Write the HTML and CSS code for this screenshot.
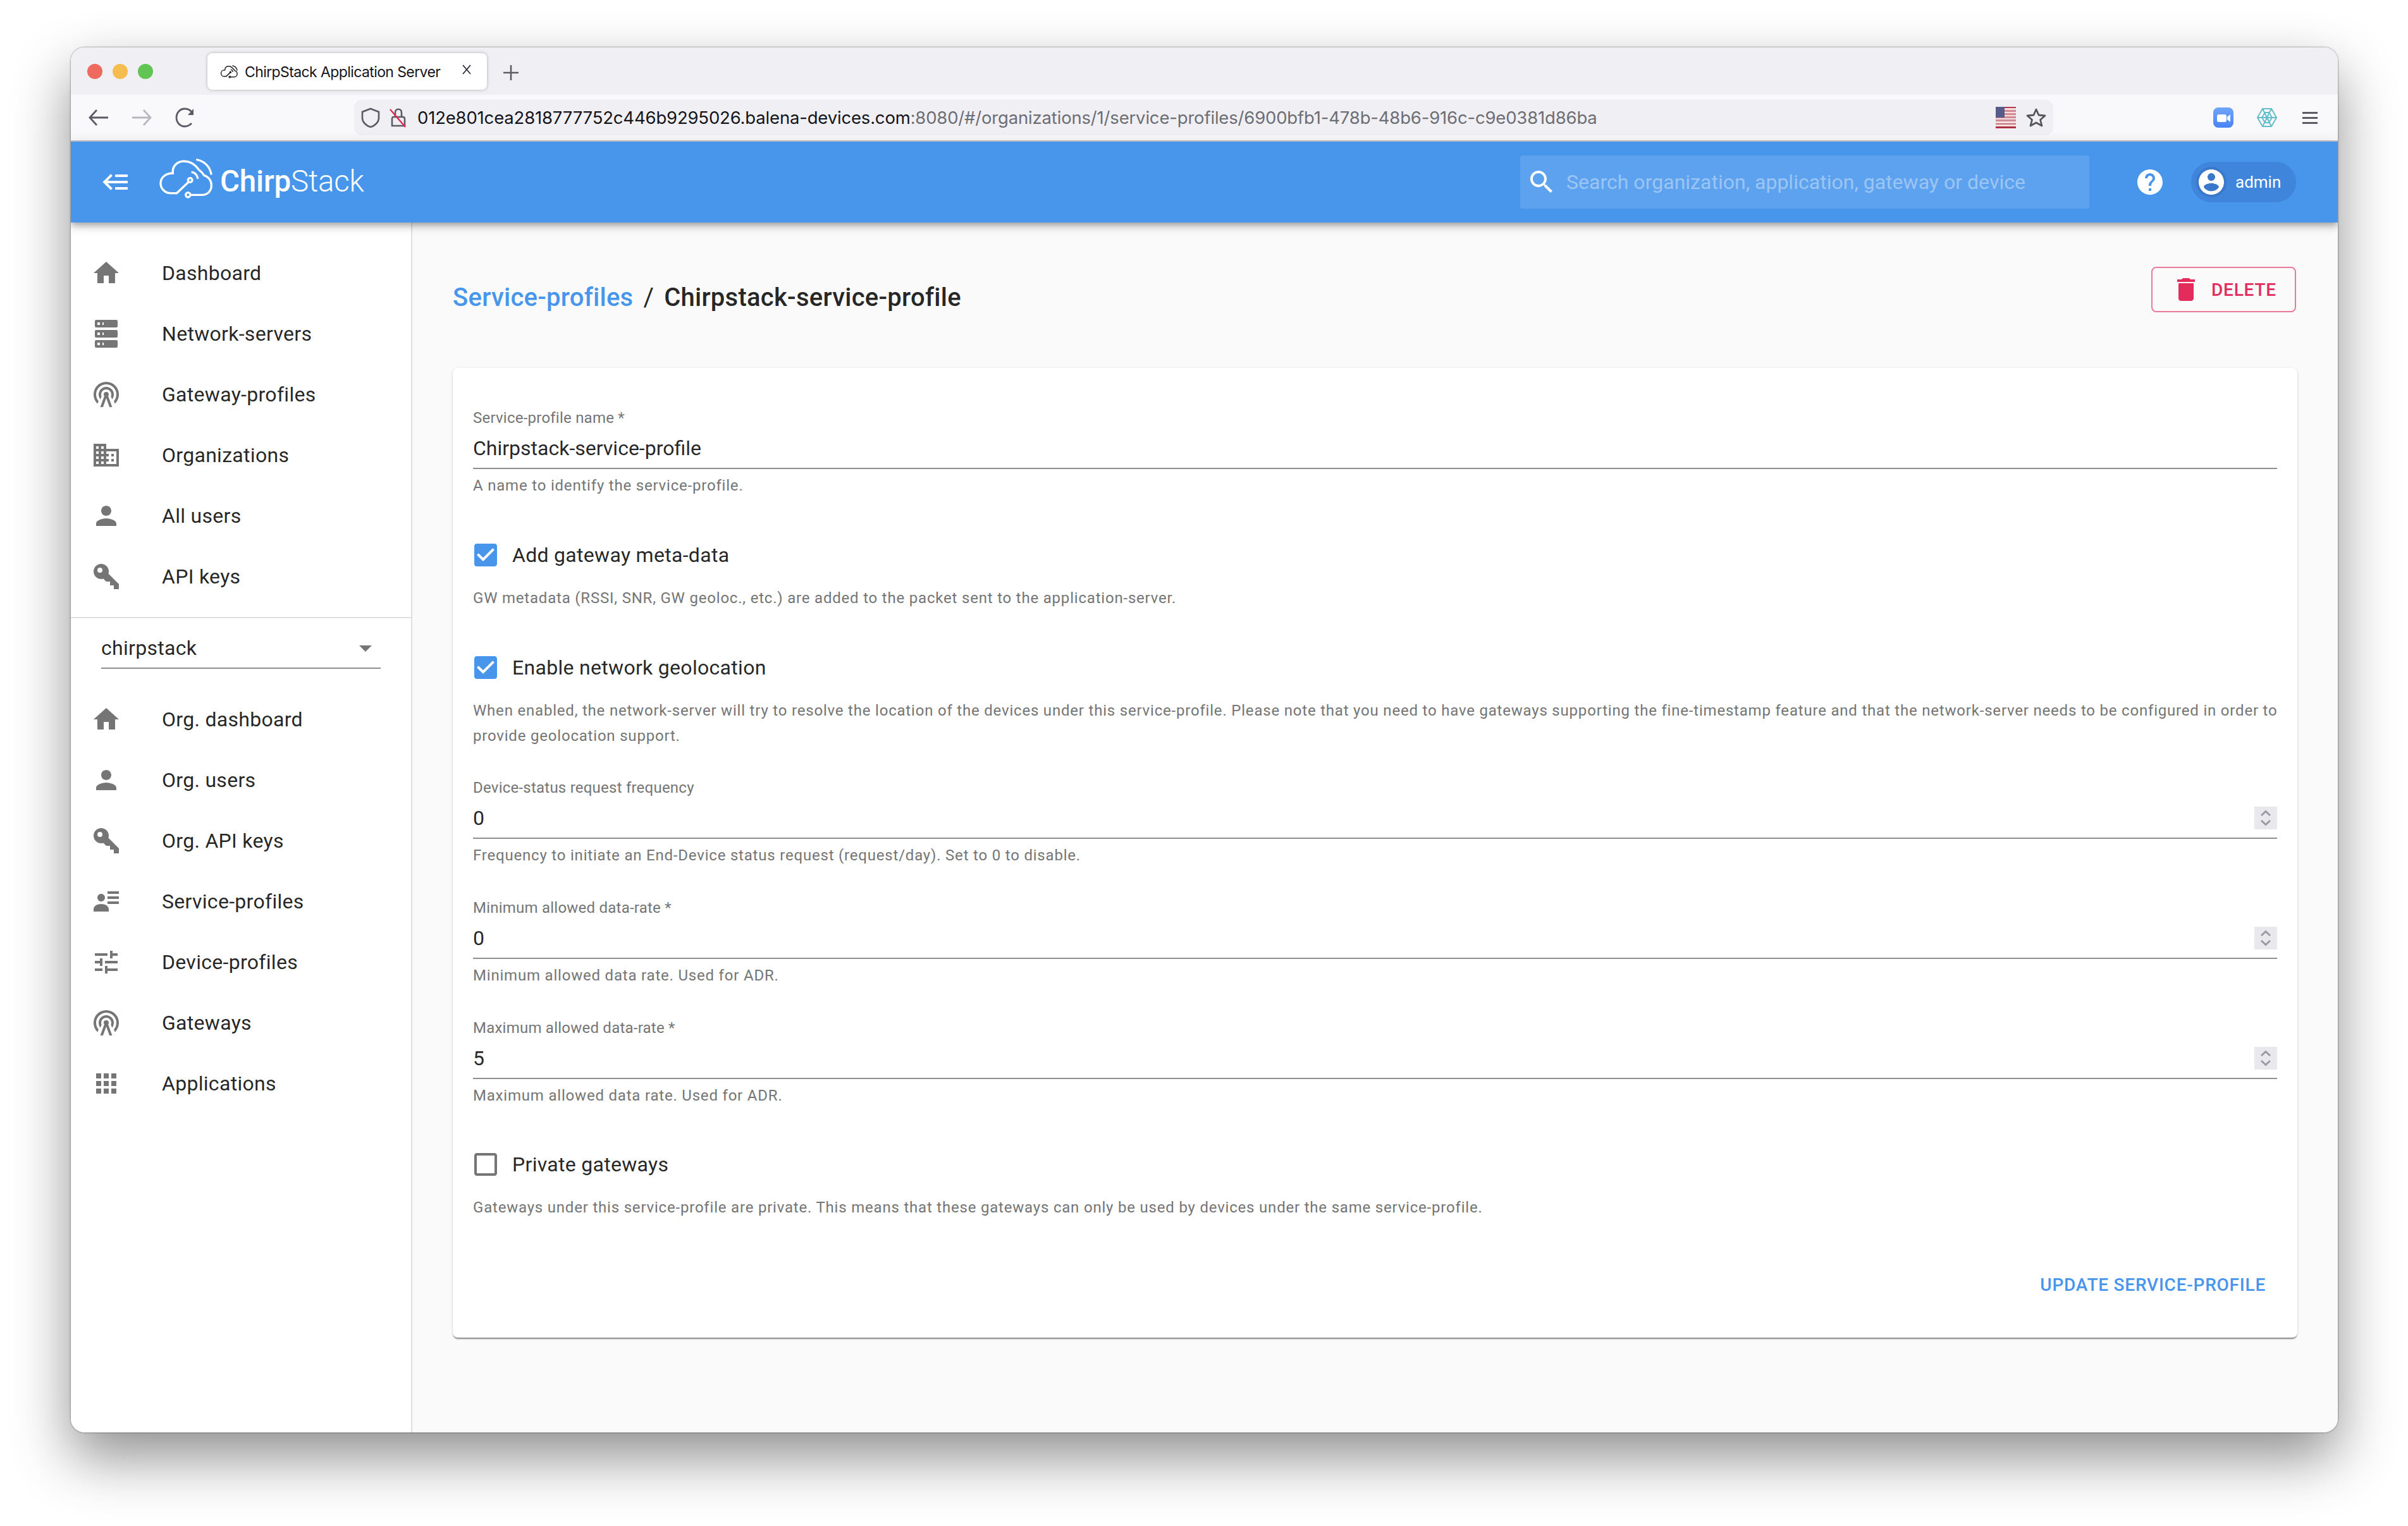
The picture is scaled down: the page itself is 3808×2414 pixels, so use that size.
FILE: index.html
```html
<!DOCTYPE html>
<html lang="en">
<head>
<meta charset="utf-8">
<title>ChirpStack Application Server</title>
<link rel="stylesheet" href="styles.css">
</head>
<body>
<svg class="sprite" aria-hidden="true">
  <defs>
    <symbol id="i-home" viewBox="0 0 24 24"><path d="M10 20v-6h4v6h5v-8h3L12 3 2 12h3v8z"/></symbol>
    <symbol id="i-server" viewBox="0 0 24 24"><path d="M4,1H20A1,1 0 0,1 21,2V6A1,1 0 0,1 20,7H4A1,1 0 0,1 3,6V2A1,1 0 0,1 4,1M4,9H20A1,1 0 0,1 21,10V14A1,1 0 0,1 20,15H4A1,1 0 0,1 3,14V10A1,1 0 0,1 4,9M4,17H20A1,1 0 0,1 21,18V22A1,1 0 0,1 20,23H4A1,1 0 0,1 3,22V18A1,1 0 0,1 4,17M9,5H10V3H9V5M9,13H10V11H9V13M9,21H10V19H9V21M5,3V5H7V3H5M5,11V13H7V11H5M5,19V21H7V19H5Z"/></symbol>
    <symbol id="i-tower" viewBox="0 0 24 24"><path d="M12,10A2,2 0 0,1 14,12C14,12.5 13.82,12.94 13.53,13.29L16.7,22H14.57L12,14.93L9.43,22H7.3L10.47,13.29C10.18,12.94 10,12.5 10,12A2,2 0 0,1 12,10M12,8A4,4 0 0,0 8,12C8,12.5 8.1,13 8.28,13.46L7.4,15.86C6.53,14.81 6,13.47 6,12A6,6 0 0,1 12,6A6,6 0 0,1 18,12C18,13.47 17.47,14.81 16.6,15.86L15.72,13.46C15.9,13 16,12.5 16,12A4,4 0 0,0 12,8M12,4A8,8 0 0,0 4,12C4,14 4.73,15.82 5.94,17.23L5.18,19.33C3.21,17.5 2,14.89 2,12A10,10 0 0,1 12,2A10,10 0 0,1 22,12C22,14.89 20.79,17.5 18.82,19.33L18.06,17.23C19.27,15.82 20,14 20,12A8,8 0 0,0 12,4Z"/></symbol>
    <symbol id="i-domain" viewBox="0 0 24 24"><path d="M12 7V3H2v18h20V7H12zM6 19H4v-2h2v2zm0-4H4v-2h2v2zm0-4H4V9h2v2zm0-4H4V5h2v2zm4 12H8v-2h2v2zm0-4H8v-2h2v2zm0-4H8V9h2v2zm0-4H8V5h2v2zm10 12h-8v-2h2v-2h-2v-2h2v-2h-2V9h8v10zm-2-8h-2v2h2v-2zm0 4h-2v2h2v-2z"/></symbol>
    <symbol id="i-person" viewBox="0 0 24 24"><path d="M12 12c2.21 0 4-1.79 4-4s-1.79-4-4-4-4 1.79-4 4 1.79 4 4 4zm0 2c-2.67 0-8 1.34-8 4v2h16v-2c0-2.66-5.33-4-8-4z"/></symbol>
    <symbol id="i-key" viewBox="0 0 24 24"><path d="M22,18V22H18V19H15V16H12L9.74,13.74C9.19,13.91 8.61,14 8,14A6,6 0 0,1 2,8A6,6 0 0,1 8,2A6,6 0 0,1 14,8C14,8.61 13.91,9.19 13.74,9.74L22,18M7,5A2,2 0 0,0 5,7A2,2 0 0,0 7,9A2,2 0 0,0 9,7A2,2 0 0,0 7,5Z"/></symbol>
    <symbol id="i-details" viewBox="0 0 24 24"><path d="M11,9C11,10.66 9.66,12 8,12C6.34,12 5,10.66 5,9C5,7.34 6.34,6 8,6C9.66,6 11,7.34 11,9M14,20H2V18C2,15.79 4.69,14 8,14C11.31,14 14,15.79 14,18M22,12V14H13V12M22,8V10H13V8M22,4V6H13V4Z"/></symbol>
    <symbol id="i-tune" viewBox="0 0 24 24"><path d="M3 17v2h6v-2H3zM3 5v2h10V5H3zm10 16v-2h8v-2h-8v-2h-2v6h2zM7 9v2H3v2h4v2h2V9H7zm14 4v-2H11v2h10zm-6-4h2V7h4V5h-4V3h-2v6z"/></symbol>
    <symbol id="i-apps" viewBox="0 0 24 24"><path d="M4 8h4V4H4v4zm6 12h4v-4h-4v4zm-6 0h4v-4H4v4zm0-6h4v-4H4v4zm6 0h4v-4h-4v4zm6-10v4h4V4h-4zm-6 4h4V4h-4v4zm6 6h4v-4h-4v4zm0 6h4v-4h-4v4z"/></symbol>
    <symbol id="i-checked" viewBox="0 0 24 24"><path d="M19 3H5c-1.11 0-2 .9-2 2v14c0 1.1.89 2 2 2h14c1.11 0 2-.9 2-2V5c0-1.1-.89-2-2-2zm-9 14l-5-5 1.41-1.41L10 14.17l7.59-7.59L19 8l-9 9z"/></symbol>
    <symbol id="i-unchecked" viewBox="0 0 24 24"><path d="M19 5v14H5V5h14m0-2H5c-1.1 0-2 .9-2 2v14c0 1.1.9 2 2 2h14c1.1 0 2-.9 2-2V5c0-1.1-.9-2-2-2z"/></symbol>
    <symbol id="i-spin" viewBox="0 0 36 36"><path d="M11 14l7-6.500 7 6.500M11 22l7 6.500 7-6.500"/></symbol>
    <symbol id="i-cloud" viewBox="0 0 300 255"><path d="M118 197H92C62 197 42 175 42 150C42 122 66 102 100 102C96 70 120 45 152 45C180 45 204 58 222 84C232 92 242 102 248 112C268 118 283 136 283 160C283 186 264 205 240 205H184M118 197L175 143M192 97C205 100 215 112 218 125M215 38C250 45 275 70 282 105"/><circle cx="182" cy="135" r="10"/><circle cx="172" cy="205" r="11"/></symbol>
  </defs>
</svg>

<div class="window">
  <div class="tabbar">
    <span class="light light-red"></span>
    <span class="light light-yellow"></span>
    <span class="light light-green"></span>
    <div class="tab">
      <svg class="tab-icon"><use href="#i-cloud"/></svg>
      <span class="tab-title">ChirpStack Application Server</span>
      <svg class="tab-close" viewBox="0 0 18 18"><path d="M3 2l12 14M15 2L3 16"/></svg>
    </div>
    <svg class="tab-new" viewBox="0 0 26 26"><path d="M13 1v24M1 13h24"/></svg>
  </div>

  <div class="toolbar">
    <svg class="nav-icon" viewBox="0 0 32 32"><path d="M31 16H3M13 4L2 16l11 12"/></svg>
    <svg class="nav-icon nav-off" viewBox="0 0 32 32"><path d="M1 16h28M19 4l11 12-11 12"/></svg>
    <svg class="nav-icon" viewBox="0 0 32 32"><path d="M28 8C25 4 21 2 16 2 9 2 3 8 3 16s6 14 13 14c4 0 8-2 11-5"/><path class="nav-solid" d="M21 12h9V2z"/></svg>
    <div class="urlbar">
      <svg class="url-icon" viewBox="0 0 32 32"><path d="M16 2l13 5v10c0 6-6 12-13 14C9 29 3 23 3 17V7z"/></svg>
      <svg class="url-icon" viewBox="0 0 32 32"><path d="M7 15h15c2 0 3 1 3 3v11H5V18c0-2 1-3 2-3zM10 15V8c0-7 10-7 10 0v7"/><path class="url-slash" d="M2 3l24 28"/></svg>
      <span class="url-text"><span class="url-host">012e801cea2818777752c446b9295026.balena-devices.com</span>:8080/#/organizations/1/service-profiles/6900bfb1-478b-48b6-916c-c9e0381d86ba</span>
      <svg class="flag" viewBox="0 0 32 34" preserveAspectRatio="none">
        <rect width="32" height="34" fill="#f3dfe1"/>
        <rect y="0" width="32" height="2" fill="#b33a48"/><rect y="5" width="32" height="3" fill="#cf8c95"/><rect y="10" width="32" height="3" fill="#cf8c95"/><rect y="15" width="32" height="3" fill="#cf8c95"/><rect y="20" width="32" height="3" fill="#cf8c95"/><rect y="26" width="32" height="2" fill="#c4707c"/><rect y="31" width="32" height="3" fill="#ae2f40"/>
        <rect width="14" height="17" fill="#565b8a"/>
      </svg>
      <svg class="star" viewBox="0 0 32 32"><path d="M16 3l4 9 10 1-7.500 6.500L25 29l-9-5-9 5 2.500-9.500L2 13l10-1z"/></svg>
    </div>
    <svg class="ext-zoom" viewBox="0 0 32 32"><defs><linearGradient id="zoomfill" x1="0" y1="0" x2="0" y2="1"><stop offset="0" stop-color="#6fa5fb"/><stop offset="1" stop-color="#4a83f4"/></linearGradient></defs><rect width="32" height="32" rx="8" fill="url(#zoomfill)"/><rect x="6" y="11" width="15" height="12" rx="3" fill="#fff"/><path d="M22 15l5-4v12l-5-4z" fill="#fff"/></svg>
    <svg class="ext-web" viewBox="0 0 32 32"><path d="M9 2h14l8 14-8 14H9L1 16zM13 8h6l5 8-5 8h-6l-5-8zM1 16h30M9 2l14 28M23 2L9 30"/></svg>
    <div class="burger"><span></span><span></span><span></span></div>
  </div>

  <header class="appbar">
    <svg class="menu-toggle" viewBox="0 0 24 24"><path d="M5,13L9,17L7.6,18.42L1.18,12L7.6,5.58L9,7L5,11H21V13H5M21,6V8H11V6H21M21,16V18H11V16H21Z"/></svg>
    <svg class="logo-mark"><use href="#i-cloud"/></svg>
    <span class="logo-text"><b>Chirp</b>Stack</span>
    <div class="search">
      <svg class="search-icon" viewBox="0 0 24 24"><path d="M15.5 14h-.79l-.28-.27C15.41 12.59 16 11.11 16 9.5 16 5.91 13.09 3 9.5 3S3 5.91 3 9.5 5.91 16 9.5 16c1.61 0 3.09-.59 4.23-1.57l.27.28v.79l5 4.99L20.490 19l-4.990-5zm-6 0C7.010 14 5 11.990 5 9.500S7.010 5 9.500 5 14 7.010 14 9.500 11.990 14 9.500 14z"/></svg>
      <span class="search-text">Search organization, application, gateway or device</span>
    </div>
    <svg class="help" viewBox="0 0 24 24"><path d="M12 2C6.480 2 2 6.480 2 12s4.480 10 10 10 10-4.480 10-10S17.520 2 12 2zm1 17h-2v-2h2v2zm2.070-7.750l-.900.920C13.450 12.900 13 13.500 13 15h-2v-.500c0-1.100.450-2.100 1.170-2.830l1.240-1.260c.370-.360.590-.860.590-1.410 0-1.100-.900-2-2-2s-2 .900-2 2H8c0-2.210 1.790-4 4-4s4 1.790 4 4c0 .880-.360 1.680-.930 2.250z"/></svg>
    <div class="chip">
      <span class="avatar"><svg viewBox="0 0 24 24"><path d="M12 2C6.480 2 2 6.480 2 12s4.480 10 10 10 10-4.480 10-10S17.520 2 12 2zm0 3c1.660 0 3 1.340 3 3s-1.340 3-3 3-3-1.340-3-3 1.340-3 3-3zm0 14.200c-2.500 0-4.710-1.280-6-3.220.030-1.990 4-3.080 6-3.080 1.990 0 5.970 1.090 6 3.080-1.290 1.940-3.500 3.220-6 3.220z"/></svg></span>
      <span class="chip-label">admin</span>
    </div>
  </header>

  <div class="body">
    <aside class="sidebar">
      <nav class="menu">
        <a class="menu-item"><svg class="menu-icon"><use href="#i-home"/></svg><span>Dashboard</span></a>
        <a class="menu-item"><svg class="menu-icon"><use href="#i-server"/></svg><span>Network-servers</span></a>
        <a class="menu-item"><svg class="menu-icon"><use href="#i-tower"/></svg><span>Gateway-profiles</span></a>
        <a class="menu-item"><svg class="menu-icon"><use href="#i-domain"/></svg><span>Organizations</span></a>
        <a class="menu-item"><svg class="menu-icon"><use href="#i-person"/></svg><span>All users</span></a>
        <a class="menu-item"><svg class="menu-icon"><use href="#i-key"/></svg><span>API keys</span></a>
      </nav>
      <div class="divider"></div>
      <div class="org-select">
        <span>chirpstack</span>
        <svg class="org-arrow" viewBox="0 0 24 24"><path d="M7 10l5 5 5-5z"/></svg>
      </div>
      <nav class="menu">
        <a class="menu-item"><svg class="menu-icon"><use href="#i-home"/></svg><span>Org. dashboard</span></a>
        <a class="menu-item"><svg class="menu-icon"><use href="#i-person"/></svg><span>Org. users</span></a>
        <a class="menu-item"><svg class="menu-icon"><use href="#i-key"/></svg><span>Org. API keys</span></a>
        <a class="menu-item"><svg class="menu-icon"><use href="#i-details"/></svg><span>Service-profiles</span></a>
        <a class="menu-item"><svg class="menu-icon"><use href="#i-tune"/></svg><span>Device-profiles</span></a>
        <a class="menu-item"><svg class="menu-icon"><use href="#i-tower"/></svg><span>Gateways</span></a>
        <a class="menu-item"><svg class="menu-icon"><use href="#i-apps"/></svg><span>Applications</span></a>
      </nav>
    </aside>

    <main class="main">
      <div class="title-row">
        <h1 class="crumbs"><a class="crumb-link">Service-profiles</a><span class="crumb-sep">/</span><span>Chirpstack-service-profile</span></h1>
        <button class="delete-btn">
          <svg viewBox="0 0 24 24"><path d="M6 19c0 1.100.900 2 2 2h8c1.100 0 2-.900 2-2V7H6v12zM19 4h-3.500l-1-1h-5l-1 1H5v2h14V4z"/></svg>
          <span>Delete</span>
        </button>
      </div>

      <section class="card">
        <div class="field">
          <label class="field-label">Service-profile name *</label>
          <div class="field-input"><span>Chirpstack-service-profile</span></div>
          <p class="helper">A name to identify the service-profile.</p>
        </div>
        <div class="field">
          <div class="check-row"><svg class="check on"><use href="#i-checked"/></svg><span>Add gateway meta-data</span></div>
          <p class="helper">GW metadata (RSSI, SNR, GW geoloc., etc.) are added to the packet sent to the application-server.</p>
        </div>
        <div class="field field-tight">
          <div class="check-row"><svg class="check on"><use href="#i-checked"/></svg><span>Enable network geolocation</span></div>
          <p class="helper">When enabled, the network-server will try to resolve the location of the devices under this service-profile. Please note that you need to have gateways supporting the fine-timestamp feature and that the network-server needs to be configured in order to provide geolocation support.</p>
        </div>
        <div class="field field-tight">
          <label class="field-label">Device-status request frequency</label>
          <div class="field-input"><span>0</span><svg class="spinner"><use href="#i-spin"/></svg></div>
          <p class="helper">Frequency to initiate an End-Device status request (request/day). Set to 0 to disable.</p>
        </div>
        <div class="field field-tight">
          <label class="field-label">Minimum allowed data-rate *</label>
          <div class="field-input"><span>0</span><svg class="spinner"><use href="#i-spin"/></svg></div>
          <p class="helper">Minimum allowed data rate. Used for ADR.</p>
        </div>
        <div class="field field-tight">
          <label class="field-label">Maximum allowed data-rate *</label>
          <div class="field-input"><span>5</span><svg class="spinner"><use href="#i-spin"/></svg></div>
          <p class="helper">Maximum allowed data rate. Used for ADR.</p>
        </div>
        <div class="field">
          <div class="check-row"><svg class="check"><use href="#i-unchecked"/></svg><span>Private gateways</span></div>
          <p class="helper">Gateways under this service-profile are private. This means that these gateways can only be used by devices under the same service-profile.</p>
        </div>
        <div class="card-actions"><button class="update-btn">Update service-profile</button></div>
      </section>
    </main>
  </div>
</div>
</body>
</html>
```

FILE: styles.css
```css
* { box-sizing: border-box; }
html, body { margin: 0; padding: 0; background: #fff; }
body { height: 2414px; overflow: hidden; padding: 75px 0 0 112px; font-family: Roboto, sans-serif; }
.sprite { display: none; }

.window {
  width: 3585px; height: 2191px; border-radius: 22px; background: #fafafa;
  display: flex; flex-direction: column; overflow: hidden; position: relative;
}
body::before {
  content: ""; position: absolute; left: 112px; top: 75px; width: 3585px; height: 2191px; border-radius: 22px;
  box-shadow: 0 40px 90px rgba(0,0,0,.44), 0 0 2px 1px rgba(0,0,0,.28);
}

.tabbar { height: 75px; background: #f0f0f4; display: flex; align-items: flex-start; padding-left: 26px; flex: none; }
.light { width: 24px; height: 24px; border-radius: 50%; margin: 26px 16px 0 0; flex: none; }
.light-red { background: #ee6a5f; }
.light-yellow { background: #f5bd4f; }
.light-green { background: #61c454; }
.tab {
  width: 442px; height: 58px; margin: 9px 0 0 70px; background: #fff; border-radius: 8px;
  box-shadow: 0 0 5px rgba(0,0,0,.28); display: flex; align-items: center; padding-left: 17px;
}
.tab-icon { width: 32px; height: 27px; fill: none; stroke: #222; stroke-width: 14; stroke-linecap: round; flex: none; }
.tab-title { font: 400 23px/1 Inter, sans-serif; color: #15141a; margin-left: 10px; width: 313px; white-space: nowrap; letter-spacing: -.6px; position: relative; top: 1px; }
.tab-close { width: 18px; height: 18px; margin-left: 29px; fill: none; stroke: #2b2a33; stroke-width: 1.8; flex: none; position: relative; top: -3px; }
.tab-new { width: 26px; height: 26px; margin: 27px 0 0 25px; fill: none; stroke: #5b5b66; stroke-width: 2.6; flex: none; }

.toolbar { height: 74px; background: #f9f9fb; border-bottom: 2px solid #c6c6c8; display: flex; align-items: center; padding-left: 28px; flex: none; }
.nav-icon { width: 32px; height: 32px; margin-right: 36px; fill: none; stroke: #5b5b66; stroke-width: 2.8; flex: none; }
.nav-off { stroke: #b8b8be; }
.nav-solid { fill: #5b5b66; stroke: none; }
.urlbar {
  width: 2687px; height: 56px; margin-left: 216px; background: #f0f0f4; border-radius: 12px;
  display: flex; align-items: center; padding: 0 11px 0 10px; flex: none;
}
.url-icon { width: 32px; height: 32px; margin-right: 13px; fill: none; stroke: #5b5b66; stroke-width: 2.6; flex: none; }
.url-slash { stroke: #e22850; stroke-width: 2.4; }
.url-text { font: 400 27.500px/1 Inter, sans-serif; color: #6d6d74; white-space: nowrap; letter-spacing: -.18px; padding-top: 2px; }
.url-host { color: #15141a; }
.flag { width: 32px; height: 34px; margin-left: auto; flex: none; }
.star { width: 32px; height: 32px; margin-left: 16px; fill: none; stroke: #55555e; stroke-width: 2.800; stroke-linejoin: round; flex: none; }
.ext-zoom { width: 32px; height: 32px; margin-left: 253px; flex: none; }
.ext-web { width: 32px; height: 32px; margin-left: 37px; fill: none; stroke: #63bcca; stroke-width: 1.900; flex: none; }
.burger { width: 24px; margin-left: 40px; display: flex; flex-direction: column; gap: 5px; flex: none; }
.burger span { display: block; height: 3px; background: #5b5b66; }

.appbar {
  height: 128px; background: #4796ec; display: flex; align-items: center; padding: 0 66px 0 48px; flex: none; position: relative; z-index: 2;
  box-shadow: 0 4px 8px -2px rgba(0,0,0,.2), 0 8px 10px 0 rgba(0,0,0,.14), 0 2px 20px 0 rgba(0,0,0,.12);
}
.menu-toggle { width: 48px; height: 48px; fill: #fff; flex: none; }
.logo-mark { width: 100px; height: 85px; margin: 0 0 11px 32px; fill: none; stroke: #fff; stroke-width: 10; stroke-linecap: round; flex: none; }
.logo-text { margin-left: 8px; font: 300 47.500px/1 Roboto, sans-serif; color: #fff; letter-spacing: -.2px; }
.logo-text b { font-weight: 500; }
.search { width: 900px; height: 84px; margin-left: auto; background: #5da2ef; border-radius: 4px; display: flex; align-items: center; padding-left: 10px; }
.search-icon { width: 48px; height: 48px; fill: #fff; flex: none; }
.search-text { margin-left: 15px; font-size: 32px; color: #9cc5f3; letter-spacing: .02px; white-space: nowrap; }
.help { width: 48px; height: 48px; margin-left: 72px; fill: #fff; flex: none; }
.chip { width: 166px; height: 64px; margin-left: 41px; background: #3f85dc; border-radius: 32px; display: flex; align-items: center; padding-left: 8px; flex: none; }
.avatar { width: 48px; height: 48px; border-radius: 50%; background: #3a78cc; flex: none; }
.avatar svg { display: block; width: 48px; height: 48px; fill: #fff; }
.chip-label { margin-left: 14px; font-size: 26px; color: #fff; }

.body { flex: 1; display: flex; min-height: 0; }
.sidebar { width: 540px; flex: none; background: #fff; border-right: 2px solid #e0e0e0; padding-top: 32px; }
.menu { display: flex; flex-direction: column; }
.menu-item { height: 96px; display: flex; align-items: center; padding-left: 32px; font-size: 32px; color: rgba(0,0,0,.87); letter-spacing: .300px; }
.menu-icon { width: 48px; height: 48px; margin-right: 64px; fill: #757575; flex: none; }
.divider { height: 2px; margin-top: 16px; background: #e0e0e0; }
.org-select {
  width: 442px; height: 60px; margin: 20px 0 32px 48px; padding: 0 0 5px 0; border-bottom: 2px solid #8e8e8e;
  display: flex; align-items: center; justify-content: space-between; font-size: 32px; color: rgba(0,0,0,.87); letter-spacing: .300px;
}
.org-arrow { width: 48px; height: 48px; fill: #757575; flex: none; }

.main { flex: 1; padding: 70px 64px 0 64px; min-width: 0; }
.title-row { height: 72px; margin-bottom: 88px; display: flex; justify-content: space-between; align-items: flex-start; }
.crumbs { margin: 25px 0 0; font-size: 40px; line-height: 48px; font-weight: 500; color: rgba(0,0,0,.87); letter-spacing: .25px; }
.crumb-link { color: #4796ec; }
.crumb-sep { margin: 0 16px; font-weight: 400; }
.delete-btn {
  width: 229px; height: 72px; margin-right: 2px; background: transparent; border: 2px solid #e8799b; border-radius: 8px; display: flex; align-items: center; padding: 0 0 0 31px;
  font: 500 28px/1 Roboto, sans-serif; text-transform: uppercase; letter-spacing: .800px; color: #e32c5c;
}
.delete-btn svg { width: 48px; height: 48px; fill: #e32c5c; margin: 0 16px 0 -2px; flex: none; }
.delete-btn span { position: relative; top: 1px; }

.card { background: #fff; border-radius: 8px; padding: 63px 32px 50px; box-shadow: 0 3px 2px -1px rgba(0,0,0,.42), 0 1px 3px 1px rgba(0,0,0,.10); height: 1534px; }
.field { margin-bottom: 47px; }
.field-tight { margin-bottom: 46px; }
.field-label { display: block; height: 32px; font-size: 24px; line-height: 32px; color: #757575; letter-spacing: .23px; }
.field-input { height: 65px; border-bottom: 2px solid #8e8e8e; display: flex; align-items: center; justify-content: space-between; font-size: 32px; color: rgba(0,0,0,.87); }
.spinner { width: 36px; height: 36px; background: #e9e9ed; fill: none; stroke: #9a99a5; stroke-width: 3; flex: none; }
.helper { margin: 7px -8px 0 0; font-size: 24px; line-height: 39.840px; letter-spacing: .800px; color: #757575; }
.check-row { height: 84px; margin-left: -4px; display: flex; align-items: center; font-size: 32px; color: rgba(0,0,0,.87); letter-spacing: .300px; }
.check { width: 48px; height: 48px; margin-right: 18px; fill: #757575; flex: none; }
.check.on { fill: #4796ec; }
.card-actions { display: flex; justify-content: flex-end; margin-top: 66px; }
.update-btn { height: 72px; padding: 0 18px; background: none; border: 0; font: 500 28px/1 Roboto, sans-serif; letter-spacing: .770px; text-transform: uppercase; color: #4796ec; }
```
